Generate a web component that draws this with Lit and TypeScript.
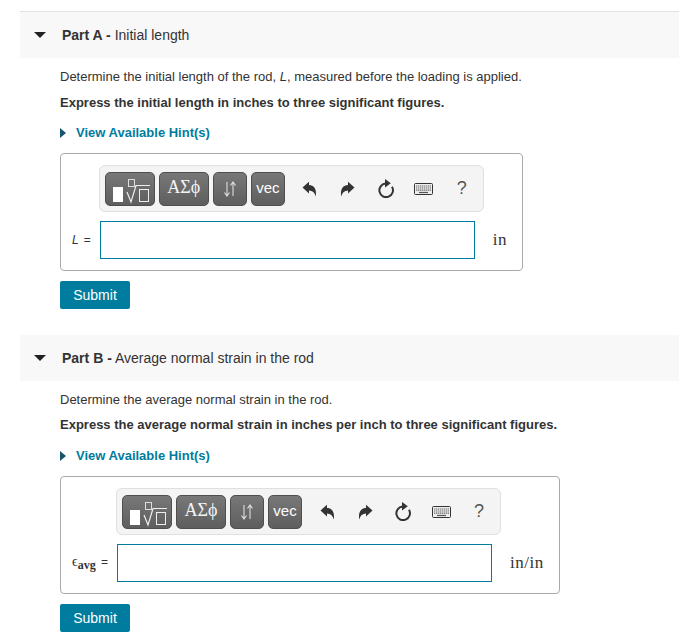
import { LitElement, html, css, svg } from "lit";
import { customElement, property } from "lit/decorators.js";

const undo = svg`<path d="M0.5 6.5 L7 0.8 L7 4 C11.5 4 15 7.5 13.8 15.5 C12.8 11.5 10.5 9.4 7 9.4 L7 12.4 Z" fill="#333"/>`;
const redo = svg`<path d="M14.5 6.5 L8 0.8 L8 4 C3.5 4 0 7.5 1.2 15.5 C2.2 11.5 4.5 9.4 8 9.4 L8 12.4 Z" fill="#333"/>`;

@customElement("math-box")
class MathBox extends LitElement {
  static styles = css`
    :host { display: block; }
    .box {
      display: inline-grid;
      grid-template-columns: auto 375px auto;
      box-sizing: border-box;
      border: 1px solid #aaa;
      border-radius: 4px;
      padding: 11px 15px 11px 11px;
      row-gap: 9px;
      align-items: center;
    }
    .toolbar {
      grid-column: 2;
      grid-row: 1;
      box-sizing: border-box;
      width: 385px;
      height: 47px;
      margin-left: -1px;
      background: #f4f4f4;
      border: 1px solid #e0e0e0;
      border-radius: 6px;
      display: flex;
      align-items: center;
      padding-left: 5px;
    }
    .btn {
      box-sizing: border-box;
      height: 34px;
      margin-right: 4px;
      border: 1px solid #4f4f4f;
      border-radius: 5px;
      background: linear-gradient(#787878, #5e5e5e);
      color: #fff;
      display: flex;
      align-items: center;
      justify-content: center;
    }
    .b1 { width: 50px; }
    .b2 { width: 50px; padding-bottom: 2px; font: 18px "Liberation Serif", serif; color: #f4f4f4; }
    .b3 { width: 34px; }
    .b4 { width: 34px; margin-right: 0; padding-bottom: 2px; font: 15px "Liberation Sans", sans-serif; }
    .tools {
      display: flex;
      align-items: center;
      margin-left: 6px;
    }
    .tool {
      width: 38px;
      display: flex;
      justify-content: center;
      align-items: center;
      color: #555;
      font: 18px "Liberation Sans", sans-serif;
    }
    .label {
      grid-column: 1;
      grid-row: 2;
      font: italic 12px "Liberation Sans", sans-serif;
      color: #333;
      padding-right: 9px;
      white-space: nowrap;
    }
    .label .eq { font-style: normal; margin-left: 2px; }
    .eps { font: 14px "Liberation Serif", serif; }
    .eps sub { font: bold 12px "Liberation Serif", serif; vertical-align: -3px; }
    .input {
      grid-column: 2;
      grid-row: 2;
      box-sizing: border-box;
      width: 375px;
      height: 38px;
      border: 1px solid #007c9e;
      background: #fff;
    }
    .unit {
      grid-column: 3;
      grid-row: 2;
      font: 17px "Liberation Serif", serif;
      letter-spacing: 0.5px;
      color: #333;
      padding-left: 18px;
      white-space: nowrap;
    }
  `;
  @property() unit = "";
  @property({ type: Boolean }) eps = false;
  render() {
    return html`<div class="box">
      <div class="toolbar">
        <div class="btn b1">
          <svg width="48" height="32" viewBox="0 0 48 32">
            <rect x="7" y="14" width="10" height="15" fill="#fff"/>
            <rect x="22.5" y="6.5" width="6" height="7" fill="none" stroke="#ddd"/>
            <path d="M21 19 L25 29 L30 12.5 H44" fill="none" stroke="#eee" stroke-width="1.2"/>
            <rect x="33.5" y="16.5" width="9" height="12" fill="none" stroke="#eee"/>
          </svg>
        </div>
        <div class="btn b2">ΑΣϕ</div>
        <div class="btn b3">
          <svg width="16" height="18" viewBox="0 0 16 18" fill="none" stroke="#ddd" stroke-width="1.1">
            <path d="M5 2 V16 M2.5 12.5 L5 16 L7.5 12.5"/>
            <path d="M11 16 V2 M8.5 5.5 L11 2 L13.5 5.5"/>
          </svg>
        </div>
        <div class="btn b4">vec</div>
        <div class="tools">
          <div class="tool"><svg width="15" height="16" viewBox="0 0 15 16">${undo}</svg></div>
          <div class="tool"><svg width="15" height="16" viewBox="0 0 15 16">${redo}</svg></div>
          <div class="tool">
            <svg width="18" height="19" viewBox="0 0 18 19" fill="none">
              <path d="M9 4.5 A6.8 6.8 0 1 0 15 7.8" stroke="#333" stroke-width="2"/>
              <path d="M8 0 L13.8 4.2 L8 8.5 Z" fill="#333"/>
            </svg>
          </div>
          <div class="tool">
            <svg width="19" height="12" viewBox="0 0 19 12">
              <rect x="0.5" y="0.5" width="18" height="11" rx="1" fill="#eee" stroke="#333"/>
              <path d="M2 3 H17 M2 5 H17 M2 7.2 H17" stroke="#666" stroke-width="1.2" stroke-dasharray="1.4 .6"/>
              <path d="M5 9.5 H14" stroke="#555" stroke-width="1.2"/>
            </svg>
          </div>
          <div class="tool">?</div>
        </div>
      </div>
      <div class="label">
        ${this.eps
          ? html`<span class="eps">ϵ<sub>avg</sub></span><span class="eq"> =</span>`
          : html`L <span class="eq">=</span>`}
      </div>
      <div class="input"></div>
      <div class="unit">${this.unit}</div>
    </div>`;
  }
}

@customElement("part-section")
class PartSection extends LitElement {
  static styles = css`
    :host { display: block; font: 13px "Liberation Sans", sans-serif; color: #333; }
    .head {
      height: 46px;
      background: #f8f8f8;
      margin-left: 20px;
      display: flex;
      align-items: center;
      gap: 16px;
      padding-left: 14px;
      box-sizing: border-box;
      font-size: 14px;
    }
    .tri {
      width: 0; height: 0;
      border-left: 6px solid transparent;
      border-right: 6px solid transparent;
      border-top: 6px solid #222;
    }
    .body { padding: 10px 0 0 60px; }
    .p { height: 26px; line-height: 18px; margin: 0; white-space: nowrap; }
    .bold { font-weight: bold; height: 30px; }
    .hint {
      display: flex;
      align-items: center;
      gap: 10px;
      font-weight: bold;
      color: #007c9e;
      line-height: 18px;
      margin-bottom: 11px;
    }
    .second .p { height: 25px; }
    .second .bold { height: 31px; }
    .hint i {
      width: 0; height: 0;
      border-top: 5px solid transparent;
      border-bottom: 5px solid transparent;
      border-left: 6px solid #17566e;
    }
    .submit {
      display: block;
      box-sizing: border-box;
      width: 70px;
      height: 28px;
      margin-top: 10px;
      border: 0;
      border-radius: 2px;
      background: #007c9e;
      color: #fff;
      font: 14px "Liberation Sans", sans-serif;
      padding: 0;
    }
    b { font-weight: bold; }
  `;
  @property() part = "";
  @property() title2 = "";
  @property() unit = "";
  @property({ type: Boolean }) eps = false;
  render() {
    return html`
      <div class="head"><span class="tri"></span><span><b>Part ${this.part} -</b> ${this.title2}</span></div>
      <div class="body ${this.part === "B" ? "second" : ""}">
        <p class="p"><slot name="q"></slot></p>
        <p class="p bold"><slot name="e"></slot></p>
        <div class="hint"><i></i>View Available Hint(s)</div>
        <math-box .unit=${this.unit} .eps=${this.eps}></math-box>
        <button class="submit">Submit</button>
      </div>`;
  }
}

@customElement("app-root")
export class AppRoot extends LitElement {
  static styles = css`
    :host { display: block; padding-top: 11px; background: #fff; }
    .rule { height: 1px; background: #e2e2e2; margin-left: 20px; }
    .gap { height: 26px; }
  `;
  render() {
    return html`
      <div class="rule"></div>
      <part-section part="A" title2="Initial length" unit="in">
        <span slot="q">Determine the initial length of the rod, <i>L</i>, measured before the loading is applied.</span>
        <span slot="e">Express the initial length in inches to three significant figures.</span>
      </part-section>
      <div class="gap"></div>
      <part-section part="B" title2="Average normal strain in the rod" unit="in/in" eps>
        <span slot="q">Determine the average normal strain in the rod.</span>
        <span slot="e">Express the average normal strain in inches per inch to three significant figures.</span>
      </part-section>`;
  }
}
